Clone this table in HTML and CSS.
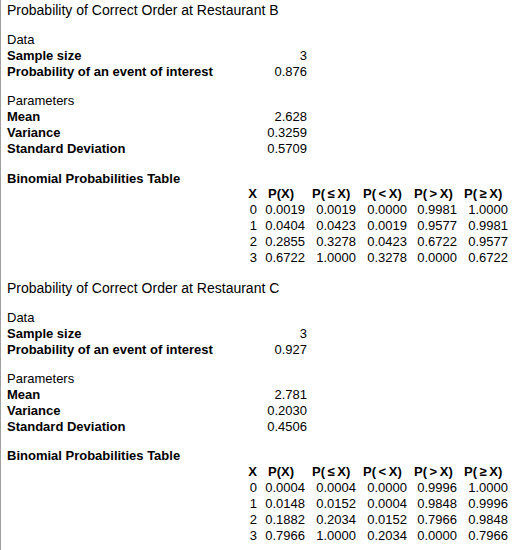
FILE: index.html
```html
<!DOCTYPE html>
<html>
<head>
<meta charset="utf-8">
<link rel="stylesheet" href="styles.css">
</head>
<body>
<div class="page">
  <section class="report">
    <div class="title">Probability of Correct Order at Restaurant B</div>
    <div class="block data">
      <div class="head">Data</div>
      <div class="kv"><span class="k">Sample size</span><span class="v">3</span></div>
      <div class="kv"><span class="k">Probability of an event of interest</span><span class="v">0.876</span></div>
    </div>
    <div class="block params">
      <div class="head">Parameters</div>
      <div class="kv"><span class="k">Mean</span><span class="v">2.628</span></div>
      <div class="kv"><span class="k">Variance</span><span class="v">0.3259</span></div>
      <div class="kv"><span class="k">Standard Deviation</span><span class="v">0.5709</span></div>
    </div>
    <div class="block binom">
      <div class="head bold">Binomial Probabilities Table</div>
      <div class="tbl">
        <div class="hx">X</div><div class="h h1">P(X)</div><div class="h">P(&#8201;≤&#8201;X)</div><div class="h">P(&#8201;&lt;&#8201;X)</div><div class="h">P(&#8201;&gt;&#8201;X)</div><div class="h">P(&#8201;≥&#8201;X)</div>
        <div class="c">0</div><div class="c">0.0019</div><div class="c">0.0019</div><div class="c">0.0000</div><div class="c">0.9981</div><div class="c">1.0000</div>
        <div class="c">1</div><div class="c">0.0404</div><div class="c">0.0423</div><div class="c">0.0019</div><div class="c">0.9577</div><div class="c">0.9981</div>
        <div class="c">2</div><div class="c">0.2855</div><div class="c">0.3278</div><div class="c">0.0423</div><div class="c">0.6722</div><div class="c">0.9577</div>
        <div class="c">3</div><div class="c">0.6722</div><div class="c">1.0000</div><div class="c">0.3278</div><div class="c">0.0000</div><div class="c">0.6722</div>
      </div>
    </div>
  </section>
  <section class="report second">
    <div class="title">Probability of Correct Order at Restaurant C</div>
    <div class="block data">
      <div class="head">Data</div>
      <div class="kv"><span class="k">Sample size</span><span class="v">3</span></div>
      <div class="kv"><span class="k">Probability of an event of interest</span><span class="v">0.927</span></div>
    </div>
    <div class="block params">
      <div class="head">Parameters</div>
      <div class="kv"><span class="k">Mean</span><span class="v">2.781</span></div>
      <div class="kv"><span class="k">Variance</span><span class="v">0.2030</span></div>
      <div class="kv"><span class="k">Standard Deviation</span><span class="v">0.4506</span></div>
    </div>
    <div class="block binom">
      <div class="head bold">Binomial Probabilities Table</div>
      <div class="tbl">
        <div class="hx">X</div><div class="h h1">P(X)</div><div class="h">P(&#8201;≤&#8201;X)</div><div class="h">P(&#8201;&lt;&#8201;X)</div><div class="h">P(&#8201;&gt;&#8201;X)</div><div class="h">P(&#8201;≥&#8201;X)</div>
        <div class="c">0</div><div class="c">0.0004</div><div class="c">0.0004</div><div class="c">0.0000</div><div class="c">0.9996</div><div class="c">1.0000</div>
        <div class="c">1</div><div class="c">0.0148</div><div class="c">0.0152</div><div class="c">0.0004</div><div class="c">0.9848</div><div class="c">0.9996</div>
        <div class="c">2</div><div class="c">0.1882</div><div class="c">0.2034</div><div class="c">0.0152</div><div class="c">0.7966</div><div class="c">0.9848</div>
        <div class="c">3</div><div class="c">0.7966</div><div class="c">1.0000</div><div class="c">0.2034</div><div class="c">0.0000</div><div class="c">0.7966</div>
      </div>
    </div>
  </section>
</div>
</body>
</html>
```
FILE: styles.css
```css
html, body {
  margin: 0;
  padding: 0;
  background: #fff;
}
body {
  font-family: "Liberation Sans", Arial, sans-serif;
  font-size: 13px;
  line-height: 16px;
  color: #000;
}
.page {
  border-left: 1px solid #a0a0a0;
  min-height: 550px;
  box-sizing: border-box;
  padding: 2px 0 0 6px;
}
.title {
  font-size: 14px;
}
.report.second {
  margin-top: 14px;
}
.block.data {
  margin-top: 14px;
}
.block.params {
  margin-top: 13px;
}
.block.binom {
  margin-top: 14px;
}
.second .block.binom {
  margin-top: 13px;
}
.bold {
  font-weight: bold;
}
.kv {
  display: grid;
  grid-template-columns: 1fr auto;
  width: 300px;
}
.k {
  font-weight: bold;
}
.v {
  text-align: right;
}
.tbl {
  display: grid;
  grid-template-columns: 250px 48px 51px 51px 50px 51px;
  margin-top: -1px;
}
.second .tbl {
  margin-top: 0;
}
.hx, .h {
  font-weight: bold;
}
.hx {
  text-align: right;
}
.h {
  padding-left: 7px;
  white-space: nowrap;
}
.h1 {
  padding-left: 11px;
}
.c {
  text-align: right;
}
```
